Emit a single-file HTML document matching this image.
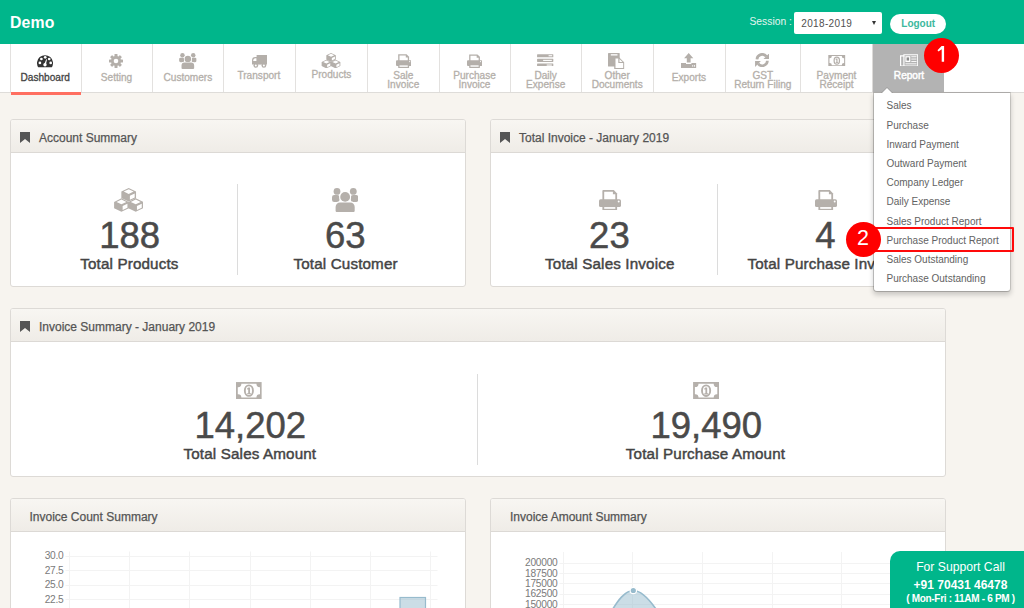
<!DOCTYPE html>
<html><head><meta charset="utf-8">
<style>
*{margin:0;padding:0;box-sizing:border-box}
html,body{width:1024px;height:608px;overflow:hidden}
body{background:#f7f4ef;font-family:"Liberation Sans",sans-serif;position:relative}
.a{position:absolute}
.t{position:absolute;white-space:nowrap;line-height:1}
#hdr{left:0;top:0;width:1024px;height:44px;background:#00b68b}
#nav{left:0;top:44px;width:1024px;height:49px;background:#fff}
#navline{left:0;top:92px;width:1024px;height:1px;background:#dedcd9}
.tab{position:absolute;top:44px;height:48px;border-left:1px solid #e2e0de}
.tl{position:absolute;white-space:nowrap;line-height:9.2px;font-size:9.5px;font-weight:700;color:#b3aea9;text-align:center;left:0;right:0}
.ic{position:absolute}
.panel{position:absolute;background:#fff;border:1px solid #dddad6;border-radius:3px;overflow:hidden}
.ph{position:absolute;left:0;top:0;right:0;height:33px;background:linear-gradient(#f8f6f2,#efece7);border-bottom:1px solid #dcd9d5}
.ptitle{position:absolute;white-space:nowrap;line-height:12px;font-size:12px;color:#555;top:12.6px;-webkit-text-stroke:0.25px #555}
.bm{position:absolute;left:9px;top:12px;width:10px;height:11px}
.num{position:absolute;white-space:nowrap;line-height:36px;font-size:37px;color:#4a4a4a;text-align:center}
.lbl{position:absolute;white-space:nowrap;line-height:14px;font-size:14.5px;font-weight:700;color:#3a3a3a;text-align:center}
.div{position:absolute;width:1px;background:#dcdcdc}
</style></head><body>

<svg width="0" height="0" style="position:absolute">
<defs>
<symbol id="i-dash" viewBox="0 0 16 12.5">
<path d="M1.3 12.5 A8 8 0 1 1 14.7 12.5 Z" fill="currentColor"/>
<g fill="#fff"><circle cx="2.9" cy="7.9" r="1.35"/><circle cx="4.4" cy="4" r="1.35"/><circle cx="8.2" cy="2.3" r="1.35"/><circle cx="12.2" cy="4" r="1.35"/><circle cx="13.7" cy="7.9" r="1.35"/><circle cx="8" cy="9.7" r="1.7"/><path d="M7.2 9.5 L9.2 4.2 L10 4.5 L8.8 10 Z"/></g>
</symbol>
<symbol id="i-cog" viewBox="0 0 14 14">
<g fill="currentColor"><circle cx="7" cy="7" r="5"/>
<rect x="5.5" y="0" width="3" height="14" rx="0.6"/>
<rect x="5.5" y="0" width="3" height="14" rx="0.6" transform="rotate(45 7 7)"/>
<rect x="5.5" y="0" width="3" height="14" rx="0.6" transform="rotate(90 7 7)"/>
<rect x="5.5" y="0" width="3" height="14" rx="0.6" transform="rotate(135 7 7)"/></g>
<circle cx="7" cy="7" r="2.3" fill="#fff"/>
</symbol>
<symbol id="i-users" viewBox="0 0 26.3 24.2">
<g fill="currentColor">
<circle cx="5" cy="3.4" r="3.4"/><circle cx="21.3" cy="3.4" r="3.4"/>
<rect x="0" y="7" width="7.5" height="6.9" rx="2.2"/><rect x="18.8" y="7" width="7.5" height="6.9" rx="2.2"/>
</g>
<circle cx="13.15" cy="8.9" r="6" fill="#fff"/>
<path d="M2.4 24.2 V18.5 A5 5 0 0 1 7.4 13.5 H18.9 A5 5 0 0 1 23.9 18.5 V24.2 Z" fill="#fff"/>
<g fill="currentColor">
<circle cx="13.15" cy="8.9" r="4.9"/>
<path d="M3.6 22.6 V19 A4.5 4.5 0 0 1 8.1 14.5 H18.2 A4.5 4.5 0 0 1 22.7 19 V22.6 A1.6 1.6 0 0 1 21.1 24.2 H5.2 A1.6 1.6 0 0 1 3.6 22.6 Z"/>
</g>
</symbol>
<symbol id="i-truck" viewBox="0 0 15.5 12.9">
<g fill="currentColor"><rect x="4.6" y="0" width="10.9" height="9.6"/><path d="M0 9.6 V5.4 Q0 2 3.2 2 H5 V9.6 Z"/><circle cx="3.8" cy="10.4" r="2.4"/><circle cx="11.9" cy="10.4" r="2.4"/></g>
<g fill="#fff"><path d="M1.2 6 Q1.3 3.2 3.4 3.2 H4.4 V6 Z"/><circle cx="3.8" cy="10.4" r="1"/><circle cx="11.9" cy="10.4" r="1"/></g>
</symbol>
<symbol id="i-cubes" viewBox="0 0 29 24"><path fill="currentColor" d="M14.60 0.00 L21.95 3.60 V9.90 L14.60 13.50 L7.25 9.90 V3.60 Z M7.35 10.30 L14.70 13.90 V20.20 L7.35 23.80 L0.00 20.20 V13.90 Z M21.65 10.30 L29.00 13.90 V20.20 L21.65 23.80 L14.30 20.20 V13.90 Z"/><path fill="#fff" d="M14.60 1.27 L19.55 3.60 L14.60 5.93 L9.65 3.60 Z M15.80 7.74 L20.60 5.39 V9.44 L15.80 11.79 Z M7.35 11.58 L12.30 13.90 L7.35 16.23 L2.40 13.90 Z M8.55 18.04 L13.35 15.69 V19.74 L8.55 22.09 Z M21.65 11.58 L26.60 13.90 L21.65 16.23 L16.70 13.90 Z M22.85 18.04 L27.65 15.69 V19.74 L22.85 22.09 Z"/></symbol>
<symbol id="i-print" viewBox="0 0 22 20.5">
<g fill="currentColor">
<path d="M3.4 0.8 A0.8 0.8 0 0 1 4.2 0 H14.8 L18.1 3.4 V10 H3.4 Z"/>
<rect x="0" y="9.2" width="22" height="7.9" rx="1.6"/>
<rect x="3.4" y="14.5" width="14.7" height="6" rx="0.8"/>
</g>
<g fill="#fff"><path d="M5.2 1.8 H13.9 V4.3 H16.3 V9.2 H5.2 Z"/><rect x="5.2" y="17.1" width="11.1" height="1.7"/><circle cx="19.7" cy="11.5" r="0.95"/></g>
</symbol>
<symbol id="i-print-s" viewBox="0 0 15.4 14">
<g fill="currentColor"><path d="M2.2 0.3 H10.6 L13.1 2.8 V7 H2.2 Z"/><rect x="0" y="6.2" width="15.4" height="5.9" rx="1"/><rect x="2.2" y="10" width="10.9" height="4" rx="0.5"/></g>
<g fill="#fff"><path d="M3.5 1.6 H9.8 V3.6 H11.8 V6.2 H3.5 Z"/><rect x="3.5" y="11.4" width="8.3" height="1.4"/><circle cx="13.7" cy="7.6" r="0.55"/></g>
</symbol>
<symbol id="i-tasks" viewBox="0 0 16.6 13">
<g fill="currentColor"><rect x="0" y="0.2" width="16.6" height="3.1" rx="0.6"/><rect x="0" y="4.9" width="16.6" height="3.1" rx="0.6"/><rect x="0" y="9.6" width="16.6" height="3.1" rx="0.6"/></g>
<g fill="#fff"><rect x="11.6" y="1.2" width="3.6" height="1.1"/><rect x="6.1" y="5.9" width="8.8" height="1.1"/><rect x="9.7" y="10.6" width="5.2" height="1.1"/></g>
</symbol>
<symbol id="i-files" viewBox="0 0 16.4 16.1">
<g fill="currentColor"><rect x="0" y="0" width="11.7" height="13.5" rx="0.6"/><path d="M6.2 4.2 H11 L16.4 9.4 V16.1 H6.2 Z"/></g>
<g fill="#fff"><rect x="2.8" y="1.2" width="6.7" height="1.3"/><path d="M7.5 5.4 H10.3 V9.9 H15.2 V14.9 H7.5 Z"/><path d="M11.5 6.1 L14.5 9 H11.5 Z"/></g>
</symbol>
<symbol id="i-upload" viewBox="0 0 15.4 15">
<g fill="currentColor"><path d="M7.7 0 L12.3 5.3 H9.6 V9.6 H5.8 V5.3 H3.1 Z"/><path d="M0 10 H5 V10.9 H10.4 V10 H15.4 V15 H0 Z"/></g>
<g fill="#fff"><rect x="11.2" y="12.2" width="1" height="1.4"/><rect x="13" y="12.2" width="1" height="1.4"/></g>
</symbol>
<symbol id="i-refresh" viewBox="0 0 14.2 14">
<g fill="none" stroke="currentColor" stroke-width="2.7"><path d="M1.9 6.3 A5.2 5.2 0 0 1 11.2 3.4"/><path d="M12.3 7.7 A5.2 5.2 0 0 1 3 10.6"/></g>
<g fill="currentColor"><path d="M14.2 0.2 V6 H8.4 Z"/><path d="M0 13.8 V8 H5.8 Z"/></g>
</symbol>
<symbol id="i-money" viewBox="0 0 26 17.3">
<rect x="0" y="0" width="26" height="17.3" fill="currentColor"/>
<path d="M5.4 1.7 H20.6 A3.4 3.4 0 0 0 24.2 5.1 V12.2 A3.4 3.4 0 0 0 20.6 15.6 H5.4 A3.4 3.4 0 0 0 1.8 12.2 V5.1 A3.4 3.4 0 0 0 5.4 1.7 Z" fill="#fff"/>
<ellipse cx="13" cy="8.65" rx="4.1" ry="5.3" fill="none" stroke="currentColor" stroke-width="1.9"/>
<path d="M12.3 5.4 H14.1 V11.2 H15.1 V12.4 H11.2 V11.2 H12.3 V7.2 L11.3 7.7 V6.3 Z" fill="currentColor"/>
</symbol>
<symbol id="i-bm" viewBox="0 0 10 11">
<path d="M0 0 H10 V11 L5 7 L0 11 Z" fill="currentColor"/>
</symbol>
</defs></svg>
<div id="hdr" class="a"></div>
<div class="t" style="left:10px;top:14.9px;font-size:15.8px;font-weight:700;letter-spacing:0.2px;color:#fff">Demo</div>
<div class="t" style="left:749.5px;top:16.9px;font-size:10.3px;color:#e3f5ef">Session :</div>
<div class="a" style="left:794px;top:11.5px;width:88px;height:22px;background:#fff;border-radius:2px"></div>
<div class="t" style="left:801.3px;top:19.1px;font-size:10px;letter-spacing:0.35px;color:#505050">2018-2019</div>
<div class="a" style="left:872px;top:20.5px;width:0;height:0;border-left:2.5px solid transparent;border-right:2.5px solid transparent;border-top:4.5px solid #333"></div>
<div class="a" style="left:890px;top:13.5px;width:56px;height:20px;background:#fff;border-radius:10px"></div>
<div class="t" style="left:901.3px;top:19.2px;font-size:10px;font-weight:700;color:#3db89d">Logout</div>

<div id="nav" class="a"></div>
<div id="navline" class="a"></div>
<div class="a" style="left:10px;top:44px;width:1px;height:48px;background:#e3e1df"></div>
<div class="a" style="left:81px;top:44px;width:1px;height:48px;background:#e3e1df"></div>
<div class="a" style="left:152px;top:44px;width:1px;height:48px;background:#e3e1df"></div>
<div class="a" style="left:223px;top:44px;width:1px;height:48px;background:#e3e1df"></div>
<div class="a" style="left:295px;top:44px;width:1px;height:48px;background:#e3e1df"></div>
<div class="a" style="left:367px;top:44px;width:1px;height:48px;background:#e3e1df"></div>
<div class="a" style="left:439px;top:44px;width:1px;height:48px;background:#e3e1df"></div>
<div class="a" style="left:510px;top:44px;width:1px;height:48px;background:#e3e1df"></div>
<div class="a" style="left:581px;top:44px;width:1px;height:48px;background:#e3e1df"></div>
<div class="a" style="left:653px;top:44px;width:1px;height:48px;background:#e3e1df"></div>
<div class="a" style="left:725px;top:44px;width:1px;height:48px;background:#e3e1df"></div>
<div class="a" style="left:800px;top:44px;width:1px;height:48px;background:#e3e1df"></div>
<div class="a" style="left:872px;top:44px;width:1px;height:48px;background:#dcdad8"></div>
<div class="a" style="left:873px;top:44px;width:71px;height:48px;background:#b3b3b3"></div>
<div class="a" style="left:11px;top:92px;width:70px;height:3px;background:#ff6f61"></div>
<svg class="a" style="left:37px;top:55px;color:#333" width="16" height="12.5" preserveAspectRatio="none"><use href="#i-dash"/></svg>
<div class="t" style="left:-14.8px;width:120px;text-align:center;top:72.88px;font-size:10.1px;color:#444;-webkit-text-stroke:0.3px #444">Dashboard</div>
<svg class="a" style="left:109.2px;top:53.5px;color:#b4afaa" width="14" height="14" preserveAspectRatio="none"><use href="#i-cog"/></svg>
<div class="t" style="left:56.5px;width:120px;text-align:center;top:72.88px;font-size:10.1px;color:#b4afaa;-webkit-text-stroke:0.3px #b4afaa">Setting</div>
<svg class="a" style="left:179px;top:52.7px;color:#b4afaa" width="17.7" height="16" preserveAspectRatio="none"><use href="#i-users"/></svg>
<div class="t" style="left:127.9px;width:120px;text-align:center;top:72.98px;font-size:10.1px;color:#b4afaa;-webkit-text-stroke:0.3px #b4afaa">Customers</div>
<svg class="a" style="left:251.6px;top:54.9px;color:#b4afaa" width="15.5" height="12.9" preserveAspectRatio="none"><use href="#i-truck"/></svg>
<div class="t" style="left:198.9px;width:120px;text-align:center;top:70.68px;font-size:10.1px;color:#b4afaa;-webkit-text-stroke:0.3px #b4afaa">Transport</div>
<svg class="a" style="left:321.3px;top:52.7px;color:#b4afaa" width="20" height="15.5" preserveAspectRatio="none"><use href="#i-cubes"/></svg>
<div class="t" style="left:271.4px;width:120px;text-align:center;top:70.38px;font-size:10.1px;color:#b4afaa;-webkit-text-stroke:0.3px #b4afaa">Products</div>
<svg class="a" style="left:395.6px;top:53.6px;color:#b4afaa" width="15.4" height="14" preserveAspectRatio="none"><use href="#i-print-s"/></svg>
<div class="t" style="left:343.3px;width:120px;text-align:center;top:70.68px;font-size:10.1px;color:#b4afaa;-webkit-text-stroke:0.3px #b4afaa">Sale</div>
<div class="t" style="left:343.3px;width:120px;text-align:center;top:79.88px;font-size:10.1px;color:#b4afaa;-webkit-text-stroke:0.3px #b4afaa">Invoice</div>
<svg class="a" style="left:466.7px;top:53.6px;color:#b4afaa" width="15.2" height="14" preserveAspectRatio="none"><use href="#i-print-s"/></svg>
<div class="t" style="left:414.5px;width:120px;text-align:center;top:70.68px;font-size:10.1px;color:#b4afaa;-webkit-text-stroke:0.3px #b4afaa">Purchase</div>
<div class="t" style="left:414.5px;width:120px;text-align:center;top:79.78px;font-size:10.1px;color:#b4afaa;-webkit-text-stroke:0.3px #b4afaa">Invoice</div>
<svg class="a" style="left:537.3px;top:53.6px;color:#b4afaa" width="16.6" height="12.9" preserveAspectRatio="none"><use href="#i-tasks"/></svg>
<div class="t" style="left:485.7px;width:120px;text-align:center;top:70.68px;font-size:10.1px;color:#b4afaa;-webkit-text-stroke:0.3px #b4afaa">Daily</div>
<div class="t" style="left:485.7px;width:120px;text-align:center;top:79.78px;font-size:10.1px;color:#b4afaa;-webkit-text-stroke:0.3px #b4afaa">Expense</div>
<svg class="a" style="left:608.3px;top:52.7px;color:#b4afaa" width="16.4" height="16.1" preserveAspectRatio="none"><use href="#i-files"/></svg>
<div class="t" style="left:557.2px;width:120px;text-align:center;top:70.68px;font-size:10.1px;color:#b4afaa;-webkit-text-stroke:0.3px #b4afaa">Other</div>
<div class="t" style="left:557.2px;width:120px;text-align:center;top:79.78px;font-size:10.1px;color:#b4afaa;-webkit-text-stroke:0.3px #b4afaa">Documents</div>
<svg class="a" style="left:681.2px;top:52.8px;color:#b4afaa" width="15.4" height="15" preserveAspectRatio="none"><use href="#i-upload"/></svg>
<div class="t" style="left:628.9px;width:120px;text-align:center;top:72.78px;font-size:10.1px;color:#b4afaa;-webkit-text-stroke:0.3px #b4afaa">Exports</div>
<svg class="a" style="left:754.9px;top:53.4px;color:#b4afaa" width="14.4" height="14.1" preserveAspectRatio="none"><use href="#i-refresh"/></svg>
<div class="t" style="left:702.8px;width:120px;text-align:center;top:70.58px;font-size:10.1px;color:#b4afaa;-webkit-text-stroke:0.3px #b4afaa">GST</div>
<div class="t" style="left:702.8px;width:120px;text-align:center;top:80.18px;font-size:10.1px;color:#b4afaa;-webkit-text-stroke:0.3px #b4afaa">Return Filing</div>
<svg class="a" style="left:828px;top:55px;color:#b4afaa" width="17.6" height="11.3" preserveAspectRatio="none"><use href="#i-money"/></svg>
<div class="t" style="left:776.5px;width:120px;text-align:center;top:70.58px;font-size:10.1px;color:#b4afaa;-webkit-text-stroke:0.3px #b4afaa">Payment</div>
<div class="t" style="left:776.5px;width:120px;text-align:center;top:80.18px;font-size:10.1px;color:#b4afaa;-webkit-text-stroke:0.3px #b4afaa">Receipt</div>
<svg class="a" style="left:899.6px;top:53.6px" width="18.3" height="12.8" viewBox="0 0 18.3 12.8">
<g fill="none" stroke="#fff" stroke-width="1.15"><path d="M3.9 0.8 H17.7 V12.2 H0.6 V1.9 H3.9 Z"/><path d="M3.9 1.9 V12.1"/></g>
<g fill="#fff"><rect x="5.4" y="2.2" width="4.9" height="5.8"/><rect x="11.3" y="2.3" width="5.2" height="0.9"/><rect x="11.3" y="4.6" width="5.2" height="0.9"/><rect x="11.3" y="7" width="5.2" height="0.9"/><rect x="5.4" y="9.4" width="11.1" height="0.9"/></g>
<rect x="6.6" y="3.4" width="2.5" height="3.2" fill="#8c8c8c"/>
</svg>
<div class="t" style="left:849.0px;width:120px;text-align:center;top:70.68px;font-size:10.1px;color:#fff;-webkit-text-stroke:0.45px #fff">Report</div>

<div class="panel" style="left:10px;top:119px;width:456px;height:168px"><div class="ph"></div><svg class="a" style="left:9px;top:11.5px;color:#555" width="10" height="11"><use href="#i-bm"/></svg><div class="ptitle" style="left:28px;top:11.64px">Account Summary</div></div>
<div class="panel" style="left:490px;top:119px;width:456px;height:168px"><div class="ph"></div><svg class="a" style="left:9px;top:11.5px;color:#555" width="10" height="11"><use href="#i-bm"/></svg><div class="ptitle" style="left:28px;top:11.64px">Total Invoice - January 2019</div></div>
<div class="panel" style="left:10px;top:308px;width:936px;height:169px"><div class="ph"></div><svg class="a" style="left:9px;top:11.5px;color:#555" width="10" height="11"><use href="#i-bm"/></svg><div class="ptitle" style="left:28px;top:11.64px">Invoice Summary - January 2019</div></div>
<div class="panel" style="left:10px;top:498px;width:456px;height:200px"><div class="ph"></div><div class="ptitle" style="left:18.5px;top:11.64px">Invoice Count Summary</div></div>
<div class="panel" style="left:490px;top:498px;width:456px;height:200px"><div class="ph"></div><div class="ptitle" style="left:19px;top:11.64px">Invoice Amount Summary</div></div>
<svg class="a" style="left:113.8px;top:188px;color:#b5b0ab" width="29.2" height="24" preserveAspectRatio="none"><use href="#i-cubes"/></svg>
<div class="t" style="left:29.6px;width:200px;text-align:center;top:217.80px;font-size:36.5px;color:#4a4a4a;-webkit-text-stroke:0.5px #4a4a4a">188</div>
<div class="t" style="left:9.4px;width:240px;text-align:center;top:255.94px;font-size:15.2px;letter-spacing:0.15px;color:#444;-webkit-text-stroke:0.45px #444">Total Products</div>
<svg class="a" style="left:332px;top:188px;color:#b5b0ab" width="26.3" height="24.2" preserveAspectRatio="none"><use href="#i-users"/></svg>
<div class="t" style="left:245.3px;width:200px;text-align:center;top:217.80px;font-size:36.5px;color:#4a4a4a;-webkit-text-stroke:0.5px #4a4a4a">63</div>
<div class="t" style="left:225.6px;width:240px;text-align:center;top:255.94px;font-size:15.2px;letter-spacing:0.15px;color:#444;-webkit-text-stroke:0.45px #444">Total Customer</div>
<svg class="a" style="left:598.6px;top:189.9px;color:#b5b0ab" width="22" height="20.5" preserveAspectRatio="none"><use href="#i-print"/></svg>
<div class="t" style="left:509.4px;width:200px;text-align:center;top:217.80px;font-size:36.5px;color:#4a4a4a;-webkit-text-stroke:0.5px #4a4a4a">23</div>
<div class="t" style="left:489.8px;width:240px;text-align:center;top:255.94px;font-size:15.2px;letter-spacing:0.15px;color:#444;-webkit-text-stroke:0.45px #444">Total Sales Invoice</div>
<svg class="a" style="left:814.6px;top:189.9px;color:#b5b0ab" width="22" height="20.5" preserveAspectRatio="none"><use href="#i-print"/></svg>
<div class="t" style="left:725.5px;width:200px;text-align:center;top:217.80px;font-size:36.5px;color:#4a4a4a;-webkit-text-stroke:0.5px #4a4a4a">4</div>
<div class="t" style="left:705.5px;width:240px;text-align:center;top:255.94px;font-size:15.2px;letter-spacing:0.15px;color:#444;-webkit-text-stroke:0.45px #444">Total Purchase Invoice</div>
<svg class="a" style="left:236.4px;top:381.5px;color:#b5b0ab" width="25.8" height="17.3" preserveAspectRatio="none"><use href="#i-money"/></svg>
<div class="t" style="left:150.3px;width:200px;text-align:center;top:408.20px;font-size:36.5px;color:#4a4a4a;-webkit-text-stroke:0.5px #4a4a4a">14,202</div>
<div class="t" style="left:129.9px;width:240px;text-align:center;top:446.04px;font-size:15.2px;letter-spacing:0.15px;color:#444;-webkit-text-stroke:0.45px #444">Total Sales Amount</div>
<svg class="a" style="left:692.8px;top:381.5px;color:#b5b0ab" width="26.2" height="17.3" preserveAspectRatio="none"><use href="#i-money"/></svg>
<div class="t" style="left:606.3px;width:200px;text-align:center;top:408.20px;font-size:36.5px;color:#4a4a4a;-webkit-text-stroke:0.5px #4a4a4a">19,490</div>
<div class="t" style="left:585.5px;width:240px;text-align:center;top:446.04px;font-size:15.2px;letter-spacing:0.15px;color:#444;-webkit-text-stroke:0.45px #444">Total Purchase Amount</div>
<div class="a" style="left:237px;top:184px;width:1px;height:91px;background:#dcdcdc"></div>
<div class="a" style="left:717px;top:184px;width:1px;height:91px;background:#dcdcdc"></div>
<div class="a" style="left:477px;top:374px;width:1px;height:91px;background:#dcdcdc"></div>
<svg class="a" style="left:0;top:0" width="1024" height="608"><g stroke="#f3f3f3" stroke-width="1"><line x1="69.5" y1="551.5" x2="69.5" y2="608"/><line x1="129.5" y1="551.5" x2="129.5" y2="608"/><line x1="189.5" y1="551.5" x2="189.5" y2="608"/><line x1="250.5" y1="551.5" x2="250.5" y2="608"/><line x1="310.5" y1="551.5" x2="310.5" y2="608"/><line x1="370.5" y1="551.5" x2="370.5" y2="608"/><line x1="430.5" y1="551.5" x2="430.5" y2="608"/><line x1="65.5" y1="556.5" x2="437.5" y2="556.5"/><line x1="65.5" y1="570.5" x2="437.5" y2="570.5"/><line x1="65.5" y1="585.5" x2="437.5" y2="585.5"/><line x1="65.5" y1="599.5" x2="437.5" y2="599.5"/><line x1="563.5" y1="552" x2="563.5" y2="608"/><line x1="632.5" y1="552" x2="632.5" y2="608"/><line x1="702.5" y1="552" x2="702.5" y2="608"/><line x1="772.5" y1="552" x2="772.5" y2="608"/><line x1="841.5" y1="552" x2="841.5" y2="608"/><line x1="911.5" y1="552" x2="911.5" y2="608"/><line x1="559.5" y1="563.5" x2="918" y2="563.5"/><line x1="559.5" y1="573.5" x2="918" y2="573.5"/><line x1="559.5" y1="583.5" x2="918" y2="583.5"/><line x1="559.5" y1="594.5" x2="918" y2="594.5"/><line x1="559.5" y1="604.5" x2="918" y2="604.5"/></g><rect x="400" y="597.5" width="25.5" height="20" fill="rgba(151,187,205,0.5)" stroke="#97bbcd" stroke-width="1.2"/><path d="M611 612 C618 600 625 590.5 633.3 590.5 C642 590.5 650 600 658 612 Z" fill="rgba(151,187,205,0.5)" stroke="#97bbcd" stroke-width="1.6"/><circle cx="633.3" cy="590.5" r="3.2" fill="#97bbcd" stroke="#fff" stroke-width="1.2"/></svg>
<div class="t" style="left:13px;width:50.5px;text-align:right;top:551.3px;font-size:10.2px;letter-spacing:-0.25px;color:#7a7a7a">30.0</div>
<div class="t" style="left:13px;width:50.5px;text-align:right;top:565.8px;font-size:10.2px;letter-spacing:-0.25px;color:#7a7a7a">27.5</div>
<div class="t" style="left:13px;width:50.5px;text-align:right;top:580.3px;font-size:10.2px;letter-spacing:-0.25px;color:#7a7a7a">25.0</div>
<div class="t" style="left:13px;width:50.5px;text-align:right;top:594.6px;font-size:10.2px;letter-spacing:-0.25px;color:#7a7a7a">22.5</div>
<div class="t" style="left:13px;width:50.5px;text-align:right;top:608.9px;font-size:10.2px;letter-spacing:-0.25px;color:#7a7a7a">20.0</div>
<div class="t" style="left:500px;width:57.5px;text-align:right;top:558.3px;font-size:10.2px;letter-spacing:-0.25px;color:#7a7a7a">200000</div>
<div class="t" style="left:500px;width:57.5px;text-align:right;top:568.7px;font-size:10.2px;letter-spacing:-0.25px;color:#7a7a7a">187500</div>
<div class="t" style="left:500px;width:57.5px;text-align:right;top:579.0px;font-size:10.2px;letter-spacing:-0.25px;color:#7a7a7a">175000</div>
<div class="t" style="left:500px;width:57.5px;text-align:right;top:589.4px;font-size:10.2px;letter-spacing:-0.25px;color:#7a7a7a">162500</div>
<div class="t" style="left:500px;width:57.5px;text-align:right;top:599.7px;font-size:10.2px;letter-spacing:-0.25px;color:#7a7a7a">150000</div>
<div class="t" style="left:500px;width:57.5px;text-align:right;top:610.0px;font-size:10.2px;letter-spacing:-0.25px;color:#7a7a7a">137500</div>
<div class="a" style="left:873px;top:92px;width:138px;height:200px;background:#fff;border:1px solid rgba(0,0,0,.15);background-clip:padding-box;border-color:rgba(0,0,0,.2);border-right-color:rgba(0,0,0,.12);border-radius:0 0 4px 4px;box-shadow:0 3px 5px rgba(0,0,0,.18)"></div>
<div class="a" style="left:881px;top:87px;width:0;height:0;border-left:6px solid transparent;border-right:6px solid transparent;border-bottom:6px solid rgba(0,0,0,.13)"></div>
<div class="a" style="left:882px;top:88.3px;width:0;height:0;border-left:5px solid transparent;border-right:5px solid transparent;border-bottom:5px solid #fff"></div>
<div class="t" style="left:886.5px;top:101.33px;font-size:10px;color:#626262">Sales</div>
<div class="t" style="left:886.5px;top:120.53px;font-size:10px;color:#626262">Purchase</div>
<div class="t" style="left:886.5px;top:139.74px;font-size:10px;color:#626262">Inward Payment</div>
<div class="t" style="left:886.5px;top:158.93px;font-size:10px;color:#626262">Outward Payment</div>
<div class="t" style="left:886.5px;top:178.14px;font-size:10px;color:#626262">Company Ledger</div>
<div class="t" style="left:886.5px;top:197.33px;font-size:10px;color:#626262">Daily Expense</div>
<div class="t" style="left:886.5px;top:216.53px;font-size:10px;color:#626262">Sales Product Report</div>
<div class="t" style="left:886.5px;top:235.74px;font-size:10px;color:#626262">Purchase Product Report</div>
<div class="t" style="left:886.5px;top:254.94px;font-size:10px;color:#626262">Sales Outstanding</div>
<div class="t" style="left:886.5px;top:274.13px;font-size:10px;color:#626262">Purchase Outstanding</div>
<div class="a" style="left:874px;top:227.4px;width:140px;height:24.4px;border:2px solid #ff0a0a;border-radius:1px"></div>
<div class="a" style="left:924.1px;top:38.4px;width:35px;height:35px;border-radius:50%;background:#ff0000"></div><svg class="a" style="left:930px;top:40px" width="24" height="28"><path d="M11.6 6.1 H14.1 V21.7 H11.7 V9.2 L8.5 11.6 L7.5 10.2 Z" fill="#fff"/></svg>
<div class="a" style="left:845.5px;top:221.9px;width:35px;height:35px;border-radius:50%;background:#ff0000"></div><div class="t" style="left:843.0px;width:40px;text-align:center;top:227.6px;font-size:21.5px;color:#fff">2</div>
<div class="a" style="left:890px;top:551px;width:140px;height:70px;background:#00b68b;border-radius:10px 0 0 0"></div>
<div class="t" style="left:900px;width:121px;text-align:center;top:561.3px;font-size:12.2px;color:#fff">For Support Call</div>
<div class="t" style="left:900px;width:121px;text-align:center;top:578.8px;font-size:12px;font-weight:700;color:#fff">+91 70431 46478</div>
<div class="t" style="left:895px;width:131px;text-align:center;top:593.5px;font-size:10px;font-weight:700;letter-spacing:-0.3px;color:#fff">( Mon-Fri : 11AM - 6 PM )</div>
</body></html>
